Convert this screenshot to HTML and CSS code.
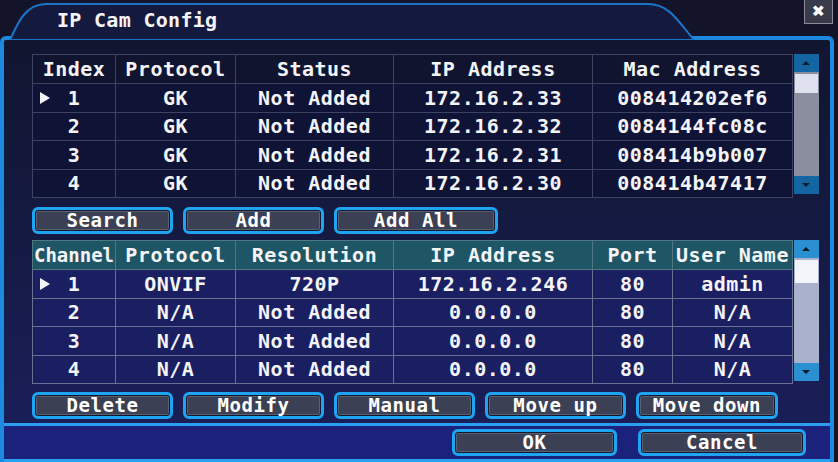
FILE: index.html
```html
<!DOCTYPE html>
<html lang="en">
  <head>
    <meta charset="UTF-8" />
    <title>IP Cam Config</title>
    <link rel="stylesheet" href="styles.css">
  </head>
  <body>
    <div class="window">
      <!-- title tab -->
      <div class="titlebar">
        <svg class="tab" width="838" height="40" viewBox="0 0 838 40">
          <path d="M10 40 C18 22 26 4 46 4 L648 4 C668 4 676 18 694 40 Z" fill="#141a3e" stroke="#1b74c8" stroke-width="2" />
        </svg>
        <span class="title">IP Cam Config</span>
        <span class="close">&#10006;</span>
      </div>

      <div class="panel">
        <div class="content">
          <!-- searched devices -->
          <div class="list">
            <table class="grid top">
              <colgroup>
                <col style="width:83px" /><col style="width:120px" /><col style="width:158px" /><col style="width:199px" /><col style="width:200px" />
              </colgroup>
              <tr class="head">
                <th>Index</th><th>Protocol</th><th>Status</th><th>IP Address</th><th>Mac Address</th>
              </tr>
              <tr>
                <td class="idx"><span class="arrow"></span>1</td><td>GK</td><td>Not Added</td><td>172.16.2.33</td><td>008414202ef6</td>
              </tr>
              <tr>
                <td class="idx">2</td><td>GK</td><td>Not Added</td><td>172.16.2.32</td><td>0084144fc08c</td>
              </tr>
              <tr>
                <td class="idx">3</td><td>GK</td><td>Not Added</td><td>172.16.2.31</td><td>008414b9b007</td>
              </tr>
              <tr>
                <td class="idx">4</td><td>GK</td><td>Not Added</td><td>172.16.2.30</td><td>008414b47417</td>
              </tr>
            </table>
            <div class="scroll dark">
              <div class="sbtn up"></div>
              <div class="track"><div class="thumb"></div></div>
              <div class="sbtn down"></div>
            </div>
          </div>

          <div class="buttons first">
            <button class="btn w140">Search</button>
            <button class="btn w140">Add</button>
            <button class="btn w164">Add All</button>
          </div>

          <!-- added channels -->
          <div class="list">
            <table class="grid bottom">
              <colgroup>
                <col style="width:83px" /><col style="width:120px" /><col style="width:158px" /><col style="width:199px" /><col style="width:80px" /><col style="width:120px" />
              </colgroup>
              <tr class="head">
                <th class="narrow">Channel</th><th>Protocol</th><th>Resolution</th><th>IP Address</th><th>Port</th><th>User Name</th>
              </tr>
              <tr>
                <td class="idx"><span class="arrow"></span>1</td><td>ONVIF</td><td>720P</td><td>172.16.2.246</td><td>80</td><td>admin</td>
              </tr>
              <tr>
                <td class="idx">2</td><td>N/A</td><td>Not Added</td><td>0.0.0.0</td><td>80</td><td>N/A</td>
              </tr>
              <tr>
                <td class="idx">3</td><td>N/A</td><td>Not Added</td><td>0.0.0.0</td><td>80</td><td>N/A</td>
              </tr>
              <tr>
                <td class="idx">4</td><td>N/A</td><td>Not Added</td><td>0.0.0.0</td><td>80</td><td>N/A</td>
              </tr>
            </table>
            <div class="scroll light">
              <div class="sbtn up"></div>
              <div class="track"><div class="thumb"></div></div>
              <div class="sbtn down"></div>
            </div>
          </div>

          <div class="buttons second">
            <button class="btn w140">Delete</button>
            <button class="btn w140">Modify</button>
            <button class="btn w140">Manual</button>
            <button class="btn w140">Move up</button>
            <button class="btn w142">Move down</button>
          </div>
        </div>

        <div class="footer">
          <button class="btn ok">OK</button>
          <button class="btn cancel">Cancel</button>
        </div>
      </div>
    </div>
  </body>
</html>
```

FILE: styles.css
```css
body {
  margin: 0;
  background: #13132a;
  font-family: "DejaVu Sans Mono", "Liberation Mono", monospace;
  font-weight: bold;
  color: #f4f4f8;
  overflow: hidden;
}

.window {
  width: 838px;
  height: 462px;
  display: flex;
  flex-direction: column;
}

/* title */
.titlebar {
  position: relative;
  height: 36px;
  display: flex;
  align-items: flex-start;
}

.tab {
  position: absolute;
  top: 0;
  left: 0;
}

.title {
  position: relative;
  margin: 8px 0 0 57px;
  font-size: 20px;
  letter-spacing: 0.3px;
  flex: 1;
}

.close {
  position: relative;
  width: 27px;
  height: 23px;
  margin: 0 5px 0 0;
  background: #3a3b4a;
  border: 1px solid #8a8c98;
  border-top: none;
  color: #ffffff;
  font-size: 21px;
  line-height: 23px;
  text-align: center;
}

/* main panel */
.panel {
  flex: 1;
  display: flex;
  flex-direction: column;
  margin-right: 4px;
  border: 4px solid #1d8ae0;
  border-bottom: none;
  border-radius: 6px 6px 0 0;
  background: linear-gradient(to bottom, #11152f 0%, #151a42 45%, #1b1f5c 100%);
}

.content {
  padding: 14px 0 0 28px;
  display: flex;
  flex-direction: column;
}

.list {
  display: flex;
  gap: 1px;
}

.grid {
  width: 760px;
  table-layout: fixed;
  border-collapse: collapse;
  font-size: 20px;
  letter-spacing: 0.5px;
  line-height: 22px;
}

.grid th,
.grid td {
  padding: 0;
  text-align: center;
  white-space: nowrap;
  overflow: hidden;
  font-weight: bold;
}

.grid th {
  height: 28px;
  font-weight: bold;
}

.grid td {
  height: 27.5px;
}

.grid th.narrow {
  font-size: 19px;
  letter-spacing: 0;
}

.idx {
  position: relative;
}

/* selected row marker */
.arrow {
  position: absolute;
  left: 7px;
  top: 8px;
  width: 0;
  height: 0;
  border-left: 10px solid #f4f4f8;
  border-top: 6px solid transparent;
  border-bottom: 6px solid transparent;
}

.top {
  border: 1px solid #333a58;
}

.top th,
.top td {
  border: 1px solid #3b4262;
  background: #0f1436;
}

.top th {
  background: #11142e;
}

.bottom th,
.bottom td {
  border: 1px solid #6a7092;
  background: #1a1f62;
}

.bottom th {
  background: #1e5666;
  border-color: #4f7886;
}

/* scrollbars */
.scroll {
  width: 25px;
  display: flex;
  flex-direction: column;
}

.sbtn {
  height: 18px;
  position: relative;
}

.sbtn::after {
  content: "";
  position: absolute;
  left: 8px;
  top: 7px;
  border-left: 4px solid transparent;
  border-right: 4px solid transparent;
}

.up::after {
  border-bottom: 4px solid #0c1a2a;
}

.down::after {
  border-top: 4px solid #0c1a2a;
}

.track {
  flex: 1;
  padding: 2px 1px;
}

.thumb {
  height: 19px;
}

.dark {
  height: 140px;
}

.dark .sbtn {
  background: #1466a2;
}

.dark .track {
  background: #8a8e9e;
}

.dark .thumb {
  background: #dfe2ee;
}

.light {
  height: 141px;
}

.light .sbtn {
  background: #2a90d2;
}

.light .track {
  background: #a9b1cc;
}

.light .thumb {
  height: 23px;
  background: #f4f5fa;
}

/* buttons */
.buttons {
  display: flex;
  gap: 10px;
}

.buttons.first {
  margin: 9px 0 6px;
}

.buttons.second {
  margin-top: 8px;
}

.btn {
  height: 27px;
  padding: 0;
  border: 3px solid #1fa4f2;
  border-radius: 6px;
  background: #3b4054;
  box-shadow: inset 0 0 0 1px #121830, inset 0 0 0 2px #5a6070;
  color: #ffffff;
  font-family: "DejaVu Sans Mono", "Liberation Mono", monospace;
  font-weight: bold;
  font-size: 19px;
  letter-spacing: 0.6px;
  line-height: 19px;
}

.w140 {
  width: 141px;
}

.w142 {
  width: 142px;
}

.w164 {
  width: 164px;
}

/* footer */
.footer {
  margin-top: auto;
  height: 33px;
  border-top: 3px solid #2a9ef0;
  border-bottom: 3px solid #2a9ef0;
  background: #1b227c;
  display: flex;
  align-items: center;
  padding-left: 448px;
  gap: 21px;
}

.ok {
  width: 165px;
}

.cancel {
  width: 168px;
}
```
